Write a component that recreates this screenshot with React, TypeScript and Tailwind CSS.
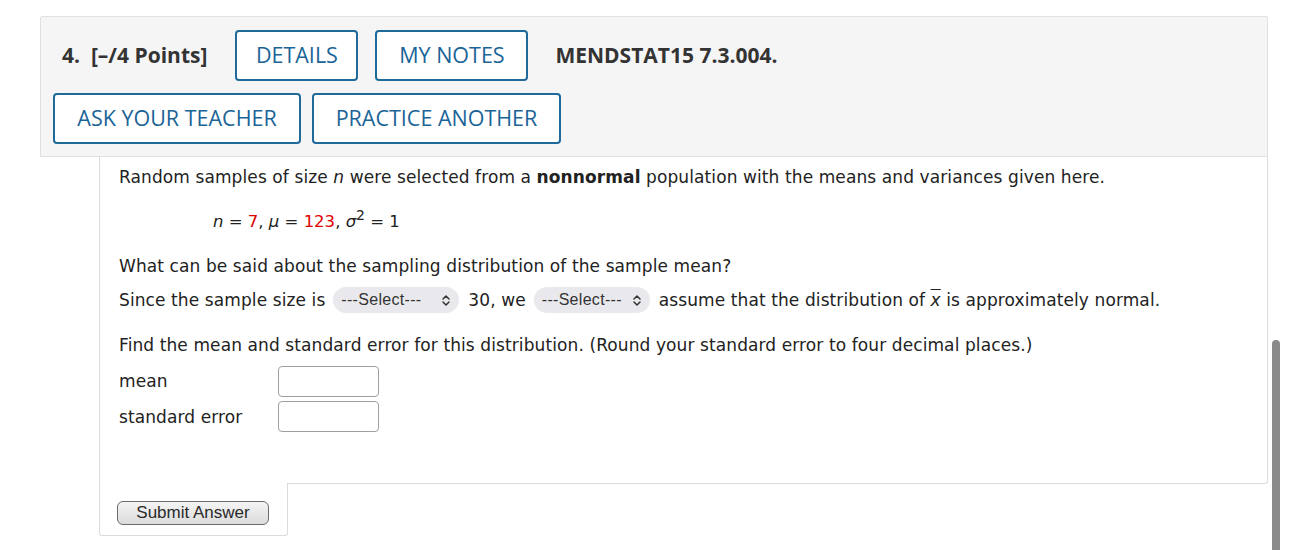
export default function App() {
  const sans = "font-['Open_Sans',sans-serif]";
  const verdana = "font-['DejaVu_Sans',Verdana,sans-serif]";
  const btn =
    "h-[51px] flex items-center justify-center border-2 border-[#1f6a9a] rounded-[4px] text-[#1a6497] text-[21.5px] bg-white";

  return (
    <div className="relative w-[1290px] h-[550px] bg-white overflow-hidden">
      {/* header */}
      <div
        className={`ml-[40px] mt-[16px] w-[1228px] h-[141px] bg-[#f5f5f5] border border-[#e0e0e0] rounded-t-[2px] pt-[13px] pl-[12px] flex flex-col gap-[12px] ${sans}`}
      >
        <div className="flex items-center">
          <span className="ml-[9px] text-[21px] font-bold text-[#333] whitespace-pre">
            4.  [–/4 Points]
          </span>
          <div className={`${btn} ml-[28px] w-[123px]`}>DETAILS</div>
          <div className={`${btn} ml-[17px] w-[153px]`}>MY NOTES</div>
          <span className="ml-[27px] text-[21px] font-bold text-[#333]">
            MENDSTAT15 7.3.004.
          </span>
        </div>
        <div className="flex items-center gap-[11px]">
          <div className={`${btn} w-[248px]`}>ASK YOUR TEACHER</div>
          <div className={`${btn} w-[249px]`}>PRACTICE ANOTHER</div>
        </div>
      </div>

      {/* question body */}
      <div
        className={`ml-[99px] w-[1169px] border-x border-b border-[#dcdcdc] rounded-br-[3px] pl-[19px] pt-[8px] pb-[51px] text-[17px] tracking-[0.1px] text-[#222] leading-[24px] ${verdana}`}
      >
        <p>
          Random samples of size <i>n</i> were selected from a <b>nonnormal</b> population
          with the means and variances given here.
        </p>
        <p className="mt-[21px] ml-[94px] text-[16.5px] tracking-normal">
          <i>n</i> = <span className="text-[#e00000]">7</span>, <i>μ</i> ={" "}
          <span className="text-[#e00000]">123</span>, <i>σ</i>
          <sup className="text-[14px]">2</sup> = 1
        </p>
        <p className="mt-[20px]">
          What can be said about the sampling distribution of the sample mean?
        </p>
        <div className="mt-[9px] flex items-center">
          <span>Since the sample size is</span>
          <Select className="ml-[8px] w-[126px]" />
          <span className="ml-[9px]">30, we</span>
          <Select className="ml-[8px] w-[116px]" />
          <span className="ml-[9px]">
            assume that the distribution of{" "}
            <span className="italic overline">x</span> is approximately normal.
          </span>
        </div>
        <p className="mt-[20px]">
          Find the mean and standard error for this distribution. (Round your standard
          error to four decimal places.)
        </p>
        <div className="mt-[9px] flex items-center h-[30px]">
          <span className="w-[159px]">mean</span>
          <div className="w-[101px] h-[31px] border border-[#a0a0a0] rounded-[4px] bg-white" />
        </div>
        <div className="mt-[5px] flex items-center h-[31px]">
          <span className="w-[159px]">standard error</span>
          <div className="w-[101px] h-[31px] border border-[#a0a0a0] rounded-[4px] bg-white" />
        </div>
      </div>

      {/* submit tab */}
      <div className="ml-[99px] -mt-px w-[189px] h-[53px] border-x border-b border-[#dcdcdc] rounded-b-[3px] bg-white pt-[17px] pl-[17px]">
        <button className="w-[152px] h-[24px] rounded-[6px] border border-[#6b6b6b] bg-gradient-to-b from-[#f4f4f4] to-[#dcdcdc] text-[17px] text-[#2a2a2a] font-['Liberation_Sans',Arial,sans-serif] leading-none">
          Submit Answer
        </button>
      </div>

      {/* scrollbar overlay */}
      <div className="absolute left-[1272px] top-[340px] w-[8px] h-[220px] rounded-full bg-[#8a8a8a]" />
    </div>
  );
}

function Select({ className = "" }: { className?: string }) {
  return (
    <div
      className={`h-[26px] rounded-[13px] bg-[#e9e9ed] flex items-center justify-between pl-[8px] pr-[8px] text-[16px] tracking-[0.3px] text-[#333] font-['Liberation_Sans',Arial,sans-serif] ${className}`}
    >
      <span>---Select---</span>
      <svg width="10" height="13" viewBox="0 0 10 13" fill="none" stroke="#333" strokeWidth="1.5" strokeLinecap="round" strokeLinejoin="round">
        <path d="M2 5 L5 2 L8 5" />
        <path d="M2 8 L5 11 L8 8" />
      </svg>
    </div>
  );
}
